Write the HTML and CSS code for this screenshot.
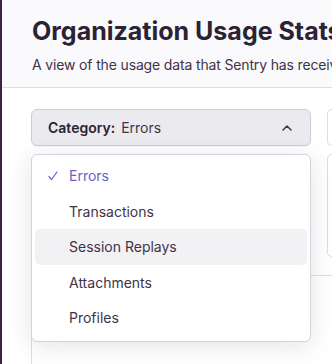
FILE: index.html
```html
<!DOCTYPE html>
<html lang="en">

<head>
    <meta charset="UTF-8">
    <title>Usage Stats</title>
    <link rel="stylesheet" href="styles.css">
</head>

<body>
    <div class="app">
        <div class="sidebar-edge"></div>
        <div class="main">
            <!-- 页面标题 -->
            <div class="page-header">
                <h1 class="page-title">Organization Usage Stats</h1>
                <p class="page-desc">A view of the usage data that Sentry has received across your organization.</p>
            </div>

            <div class="page-body">
                <div class="filters">
                    <button class="dropdown-btn">
                        <span class="dropdown-label"><b>Category:</b> Errors</span>
                        <svg class="chevron" width="12" height="12" viewBox="0 0 12 12">
                            <path d="M2 8 L6 4 L10 8" fill="none" stroke="#3e3446" stroke-width="1.5" stroke-linecap="round" stroke-linejoin="round" />
                        </svg>
                    </button>
                    <div class="filter-side"></div>
                </div>

                <div class="cards">
                    <div class="card-left"></div>
                    <div class="card-side"></div>
                </div>

                <div class="panel"></div>

                <!-- 下拉菜单 -->
                <ul class="dropdown-menu">
                    <li class="selected">
                        <svg class="check" width="10" height="10" viewBox="0 0 10 10">
                            <path d="M1 5.5 L3.6 8.5 L9 1" fill="none" stroke="#6c5fc7" stroke-width="1.2" stroke-linecap="round" stroke-linejoin="round" />
                        </svg>
                        <span>Errors</span>
                    </li>
                    <li><span>Transactions</span></li>
                    <li class="hover"><span>Session Replays</span></li>
                    <li><span>Attachments</span></li>
                    <li><span>Profiles</span></li>
                </ul>
            </div>
        </div>
    </div>
</body>

</html>
```

FILE: styles.css
```css
html,
body,
div,
ul,
li,
h1,
p {
    padding: 0;
    margin: 0;
}

ul {
    list-style: none;
}

body {
    font-family: "Inter", "Noto Sans", sans-serif;
    color: #2b2233;
    background: #fff;
}

.app {
    display: flex;
    height: 364px;
    overflow: hidden;
}

.sidebar-edge {
    width: 2px;
    flex-shrink: 0;
    background: #3b2348;
}

.main {
    flex: 1;
    min-width: 0;
}

/* 标题区域 */

.page-header {
    height: 88px;
    background: #faf9fb;
    border-bottom: 1px solid #e0dce5;
    padding: 16px 0 0 30px;
    box-sizing: border-box;
    white-space: nowrap;
    overflow: hidden;
}

.page-title {
    font-size: 25px;
    line-height: 30px;
    font-weight: 700;
    color: #2b2233;
}

.page-desc {
    margin-top: 9px;
    font-size: 14px;
    line-height: 20px;
    letter-spacing: -0.15px;
    color: #3e3446;
}

/* 内容区域 */

.page-body {
    position: relative;
    padding: 21px 0 0 29px;
}

.filters {
    display: flex;
    gap: 16px;
    height: 37px;
}

.dropdown-btn {
    width: 280px;
    flex-shrink: 0;
    height: 37px;
    display: flex;
    align-items: center;
    justify-content: space-between;
    padding: 0 16px 0 16px;
    background: #ebeaee;
    border: 1px solid #d0c9da;
    border-radius: 6px;
    font-family: inherit;
    font-size: 14px;
    color: #3e3446;
    box-shadow: 0 1px 1px rgba(43, 34, 51, .04);
}

.dropdown-label b {
    font-weight: 600;
    color: #2b2233;
    margin-right: 2px;
}

.chevron {
    margin-right: 1px;
}

.filter-side {
    flex: 1;
    border: 1px solid #e0dce5;
    border-radius: 6px 0 0 6px;
    border-right: none;
}

.cards {
    display: flex;
    gap: 16px;
    margin-top: 8px;
    height: 103px;
}

.card-left {
    width: 280px;
    flex-shrink: 0;
}

.card-side {
    flex: 1;
    border: 1px solid #e0dce5;
    border-right: none;
    border-radius: 6px 0 0 6px;
}

.panel {
    margin-top: 18px;
    height: 120px;
    border-top: 1px solid #e0dce5;
    border-left: 1px solid #e0dce5;
    border-radius: 6px 0 0 0;
}

/* 下拉菜单 */

.dropdown-menu {
    position: absolute;
    left: 29px;
    top: 66px;
    width: 280px;
    box-sizing: border-box;
    padding: 3px 3px 5px;
    background: #fff;
    border: 1px solid #d6d0df;
    border-radius: 6px;
    box-shadow: 0 4px 24px rgba(43, 34, 51, .12);
}

.dropdown-menu li {
    height: 35.5px;
    display: flex;
    align-items: center;
    padding-left: 34px;
    position: relative;
    font-size: 14px;
    color: #3e3446;
    border-radius: 5px;
}

.dropdown-menu li.hover {
    background: #f2f1f4;
}

.dropdown-menu li.selected {
    color: #6c5fc7;
}

.dropdown-menu .check {
    position: absolute;
    left: 13px;
    top: 13px;
}
```
